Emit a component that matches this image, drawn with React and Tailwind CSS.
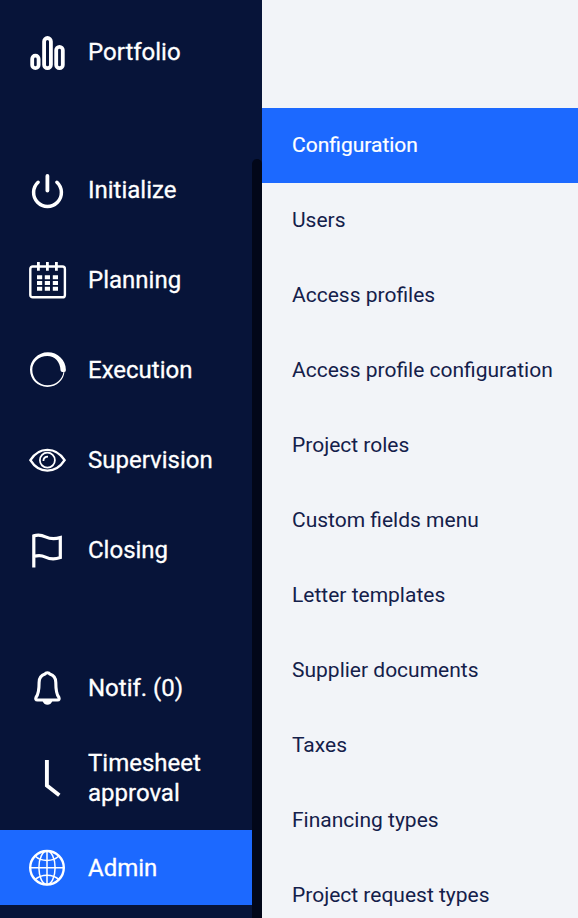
import React, { useState } from 'react';

const iconProps = {
  viewBox: '0 0 40 40',
  className: 'h-10 w-10 shrink-0',
  fill: 'none',
  stroke: 'currentColor',
};

const PortfolioIcon = () => (
  <svg {...iconProps} strokeWidth="3.8">
    <rect x="5.2" y="23.7" width="6.4" height="12.5" rx="3.2" />
    <rect x="17.1" y="6" width="6.8" height="30.2" rx="3.4" />
    <rect x="29.2" y="14.8" width="6.6" height="21.4" rx="3.3" />
  </svg>
);

const PowerIcon = () => (
  <svg {...iconProps} strokeWidth="3.5" strokeLinecap="round">
    <path d="M20.4 5.9V20.6" strokeWidth="3.8" />
    <path d="M11.1 12.3A13.9 13.9 0 1 0 29.9 12.3" />
  </svg>
);

const CalendarIcon = () => (
  <svg {...iconProps} strokeWidth="2.4">
    <rect x="3.3" y="6.5" width="34.6" height="30.8" rx="2.4" />
    <path d="M11.4 2V10.8M20.4 2V10.8M29.4 2V10.8" strokeWidth="2.8" />
    <path
      d="M10 17.3H15.2M17.8 17.3H23M25.8 17.3H31M10 23H15.2M17.8 23H23M25.8 23H31M10 28.8H15.2M17.8 28.8H23M25.8 28.8H31"
      strokeWidth="4"
    />
  </svg>
);

// ring that tapers off towards the lower right
const ProgressIcon = () => (
  <svg {...iconProps} fill="currentColor" stroke="none">
    <path d="M38.9 20C38.9 10.1 30.7 2.3 20.8 2.3C11.1 2.3 3 10.3 3 19.8C3 29.4 10.8 37 20.4 37C29.8 37 37 29.9 37.5 21.6H36.5C35.5 29.6 29.1 35.3 20.4 35.3C11.7 35.3 5.3 28.4 5.3 19.8C5.3 12 12 5.9 20.3 5.9C27.7 5.9 33.5 12 33.5 20.3Q33.6 22 35.4 22H37.4Q38.9 21.8 38.9 20Z" />
  </svg>
);

const EyeIcon = () => (
  <svg {...iconProps} strokeWidth="2.4">
    <path d="M3.4 20.2C7.7 13.2 13.4 9.9 20.4 9.9C27.4 9.9 33.1 13.2 37.6 20.2C33.1 27.3 27.4 30.6 20.4 30.6C13.4 30.6 7.7 27.3 3.4 20.2Z" />
    <circle cx="20.4" cy="20.2" r="7.5" strokeWidth="1.8" />
    <path d="M16.4 21C16.4 18.2 17.9 16.6 21 16.6" strokeWidth="1.8" />
  </svg>
);

const FlagIcon = () => (
  <svg {...iconProps} strokeWidth="3.2">
    <path d="M6.8 37.6V5.9C11 4.6 14.5 5 18.5 6.9C23 9 28 9.3 33.3 7.6V27.5C28 29.4 23 29.2 18.5 27.1C14.5 25.2 11 25 6.8 26.6" />
  </svg>
);

const BellIcon = () => (
  <svg {...iconProps} strokeWidth="3.1" strokeLinejoin="round">
    <path d="M20.4 4.7C19.2 4.7 18.4 5.2 18 6C14.3 7.2 12.1 10.1 12.1 14.4C12.1 22.3 11.4 26.2 9.1 29.2C8.3 31.2 8.8 32 10.4 32H30.5C32.1 32 32.6 31.2 31.8 29.2C29.4 26.2 28.8 22.3 28.8 14.4C28.8 10.1 26.6 7.2 22.8 6C22.4 5.2 21.6 4.7 20.4 4.7Z" />
    <path d="M15.4 32.5C16.7 38.1 24.2 38.1 25.5 32.5Z" fill="currentColor" stroke="none" />
  </svg>
);

const ClockHandsIcon = () => (
  <svg {...iconProps} strokeWidth="3.9">
    <path d="M19.9 2V27.6L32.3 37.2" />
  </svg>
);

const GlobeIcon = () => (
  <svg {...iconProps} strokeWidth="1.5">
    <circle cx="20" cy="19.8" r="16.8" strokeWidth="2.4" />
    <ellipse cx="20" cy="19.8" rx="8.1" ry="16.8" />
    <path d="M20 3V37M3 19.8H37" />
    <path d="M8 8C14.3 13.9 25.7 13.9 32 8M8 31.6C14.3 25.7 25.7 25.7 32 31.6" />
  </svg>
);

const menuGroups = [
  [{ label: 'Portfolio', Icon: PortfolioIcon }],
  [
    { label: 'Initialize', Icon: PowerIcon },
    { label: 'Planning', Icon: CalendarIcon },
    { label: 'Execution', Icon: ProgressIcon },
    { label: 'Supervision', Icon: EyeIcon },
    { label: 'Closing', Icon: FlagIcon },
  ],
  [
    { label: 'Notif. (0)', Icon: BellIcon },
    { label: 'Timesheet approval', Icon: ClockHandsIcon },
    { label: 'Admin', Icon: GlobeIcon },
  ],
];

const adminItems = [
  'Configuration',
  'Users',
  'Access profiles',
  'Access profile configuration',
  'Project roles',
  'Custom fields menu',
  'Letter templates',
  'Supplier documents',
  'Taxes',
  'Financing types',
  'Project request types',
];

export default function App() {
  const [activeMenu, setActiveMenu] = useState('Admin');
  const [activeItem, setActiveItem] = useState('Configuration');

  return (
    <div className="flex h-screen overflow-hidden bg-[#f2f4f8] font-['Roboto',sans-serif]">
      {/* Main menu */}
      <aside className="flex w-[262px] shrink-0 bg-[#071439]">
        <nav className="flex w-[252px] flex-col gap-[63px] pt-3.5">
          {menuGroups.map((group, i) => (
            <div key={i} className="flex flex-col gap-[15px]">
              {group.map(({ label, Icon }) => (
                <button
                  key={label}
                  onClick={() => setActiveMenu(label)}
                  className={`flex h-[75px] shrink-0 items-center gap-[21px] pr-8 pl-[27px] text-left text-2xl leading-[30px] text-white ${activeMenu === label ? 'bg-[#1c69ff]' : ''}`}
                >
                  <span className="pt-px">
                    <Icon />
                  </span>
                  <span className="[-webkit-text-stroke:0.3px_white]">{label}</span>
                </button>
              ))}
            </div>
          ))}
        </nav>
        {/* Scrollbar thumb */}
        <div className="mt-[159px] w-2.5 rounded-t-[5px] bg-[#020719]"></div>
      </aside>

      {/* Admin submenu */}
      <nav className="flex flex-1 flex-col pt-[108px]">
        {adminItems.map((item) => (
          <button
            key={item}
            onClick={() => setActiveItem(item)}
            className={`h-[75px] shrink-0 pl-[30px] text-left text-[21px] whitespace-nowrap ${activeItem === item ? 'bg-[#1c69ff] text-white [-webkit-text-stroke:0.2px_white]' : 'text-[#14204a]'}`}
          >
            {item}
          </button>
        ))}
      </nav>
    </div>
  );
}
